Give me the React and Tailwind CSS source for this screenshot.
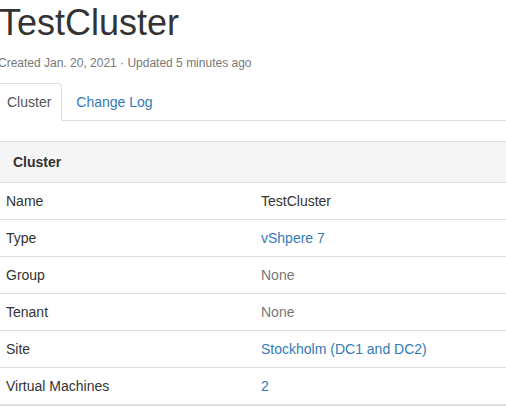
export default function App() {
  const rows = [
    { label: "Name", value: "TestCluster", kind: "text" },
    { label: "Type", value: "vShpere 7", kind: "link" },
    { label: "Group", value: "None", kind: "muted" },
    { label: "Tenant", value: "None", kind: "muted" },
    { label: "Site", value: "Stockholm (DC1 and DC2)", kind: "link" },
    { label: "Virtual Machines", value: "2", kind: "link" },
  ];
  const valueClass = {
    text: "text-[#333333]",
    link: "text-[#337ab7]",
    muted: "text-[#777777]",
  };
  return (
    <div
      className="w-[506px] h-[409px] overflow-hidden bg-white text-[#333333]"
      style={{ fontFamily: '"Liberation Sans", Arial, sans-serif' }}
    >
      <div className="ml-[-2px] w-[524px]">
        <h1 className="mt-[3px] text-[36px] leading-[40px] font-normal text-[#333333] ml-[1px]">
          TestCluster
        </h1>
        <div className="mt-[12px] text-[12px] leading-[17px] text-[#777777]">
          Created Jan. 20, 2021 · Updated 5 minutes ago
        </div>
        <div className="mt-[11px] flex border-b border-[#dddddd] h-[38px]">
          <div className="border border-[#dddddd] border-b-white bg-white rounded-t-[4px] pl-[8px] pr-[10px] py-[8px] text-[14px] leading-[20px] text-[#555555] h-[38px]">
            Cluster
          </div>
          <div className="ml-[5px] border border-transparent px-[8px] py-[8px] text-[14px] leading-[20px] text-[#337ab7]">
            Change Log
          </div>
        </div>
        <div className="mt-[20px] border border-[#dddddd]">
          <div className="bg-[#f5f5f5] border-b border-[#dddddd] px-[14px] py-[10px] text-[14px] leading-[20px] font-bold text-[#333333]">
            Cluster
          </div>
          {rows.map((r) => (
            <div
              key={r.label}
              className="grid grid-cols-[254px_1fr] text-[14px] leading-[20px] border-b border-[#dddddd]"
            >
              <div className="px-[7px] py-[8px] text-[#333333]">{r.label}</div>
              <div className={"px-[8px] py-[8px] " + valueClass[r.kind]}>{r.value}</div>
            </div>
          ))}
        </div>
      </div>
    </div>
  );
}
